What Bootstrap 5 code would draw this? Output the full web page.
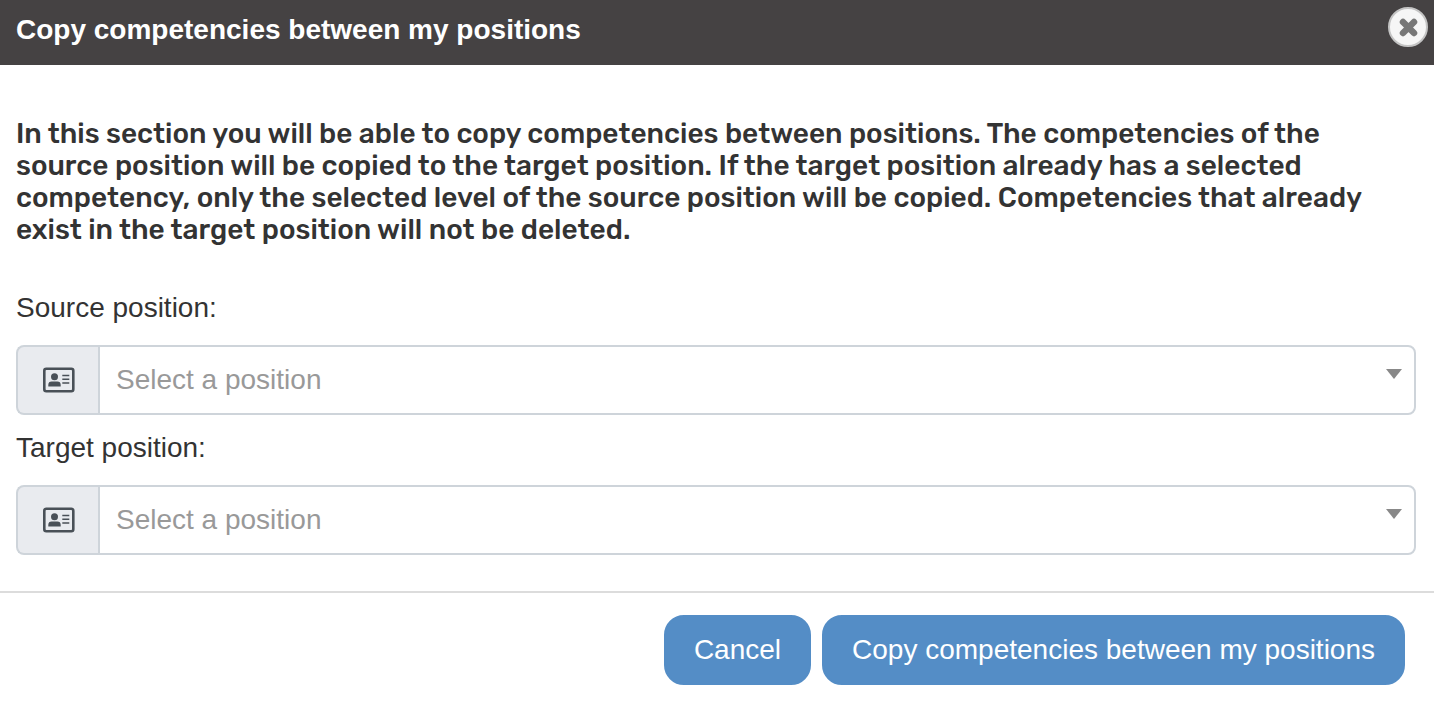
<!DOCTYPE html>
<html lang="en">
<head>
<meta charset="utf-8">
<meta name="viewport" content="width=device-width, initial-scale=1">
<title>Copy competencies between my positions</title>
<link href="https://cdn.jsdelivr.net/npm/bootstrap@5.3.0/dist/css/bootstrap.min.css" rel="stylesheet">
<style>
body{font-family:"Liberation Sans",Arial,sans-serif;font-size:28px;line-height:32px;color:#333;background:#fff}
.dialog-head{background:#454243;padding:7px 6px 18px 16px}
.dialog-head h1{font-size:28px;line-height:32px;font-weight:700;color:#fff;padding-top:7px}
.close-btn{width:40px;height:40px;border:2px solid #c4c4c4;background:#f6f6f6;border-radius:50%}
.dialog-main{padding:53px 18px 36px 16px}
.intro{font-family:Rubik,Roboto,sans-serif;font-weight:500;font-size:28px;line-height:32px;margin-bottom:46px}
.form-label{line-height:32px;margin-bottom:21px}
.field + .field{margin-top:17px}
.field .input-group-text{width:83px;background:#e9ebef;border:2px solid #ced4da;border-right:0;border-radius:8px;color:#495057}
.field .form-select{height:70px;font-size:28px;line-height:32px;color:#999;border:2px solid #ced4da;border-radius:8px;padding:0 40px 0 16px;background-image:url("data:image/svg+xml,%3Csvg xmlns='http://www.w3.org/2000/svg' viewBox='0 0 16 10'%3E%3Cpath fill='%23888' d='M0 0h16L8 10z'/%3E%3C/svg%3E");background-size:16px 10px;background-position:right 12px top 22px}
.dialog-foot{border-top:2px solid #dcdcdc;padding:22px 29px 19px 16px;gap:11px}
.dialog-foot .btn{--bs-btn-bg:#548dc6;--bs-btn-border-color:#548dc6;font-size:28px;line-height:32px;border-radius:20px;padding:17px 28px;border-width:2px}
</style>
</head>
<body>
<svg class="d-none" aria-hidden="true">
<symbol id="id-card" viewBox="0 0 32 26">
<rect x="1.3" y="1.8" width="29" height="22.400" rx="2" fill="none" stroke="currentColor" stroke-width="2.600"/>
<circle cx="11.500" cy="9.800" r="3.500" fill="currentColor"/>
<path fill="currentColor" d="M5.300 19.500v-1.500a3.400 3.400 0 0 1 3.400-3.400h5.600a3.400 3.400 0 0 1 3.400 3.400v1.500z"/>
<path stroke="currentColor" stroke-width="1.600" d="M19.300 8.500h7M19.300 12.200h7M19.300 16h7"/>
</symbol>
</svg>
<header class="dialog-head d-flex justify-content-between align-items-start">
<h1 class="m-0">Copy competencies between my positions</h1>
<button type="button" class="close-btn p-0 d-flex align-items-center justify-content-center flex-shrink-0" aria-label="Close"><svg width="20" height="20" viewBox="0 0 20 20"><path d="M5 5l11 11M16 5l-11 11" stroke="#777" stroke-width="6.500" stroke-linecap="round"/></svg></button>
</header>
<main class="dialog-main">
<p class="intro">In this section you will be able to copy competencies between positions. The competencies of the source position will be copied to the target position. If the target position already has a selected competency, only the selected level of the source position will be copied. Competencies that already exist in the target position will not be deleted.</p>
<form id="copy-form">
<div class="field">
<label class="form-label d-block" for="source">Source position:</label>
<div class="input-group">
<span class="input-group-text justify-content-center p-0"><svg width="32" height="26" aria-hidden="true"><use href="#id-card"/></svg></span>
<select class="form-select" id="source"><option>Select a position</option></select>
</div>
</div>
<div class="field">
<label class="form-label d-block" for="target">Target position:</label>
<div class="input-group">
<span class="input-group-text justify-content-center p-0"><svg width="32" height="26" aria-hidden="true"><use href="#id-card"/></svg></span>
<select class="form-select" id="target"><option>Select a position</option></select>
</div>
</div>
</form>
</main>
<footer class="dialog-foot d-flex flex-wrap justify-content-end">
<button type="button" class="btn btn-primary">Cancel</button>
<button type="submit" form="copy-form" class="btn btn-primary">Copy competencies between my positions</button>
</footer>
<script src="https://cdn.jsdelivr.net/npm/bootstrap@5.3.0/dist/js/bootstrap.bundle.min.js"></script>
</body>
</html>
